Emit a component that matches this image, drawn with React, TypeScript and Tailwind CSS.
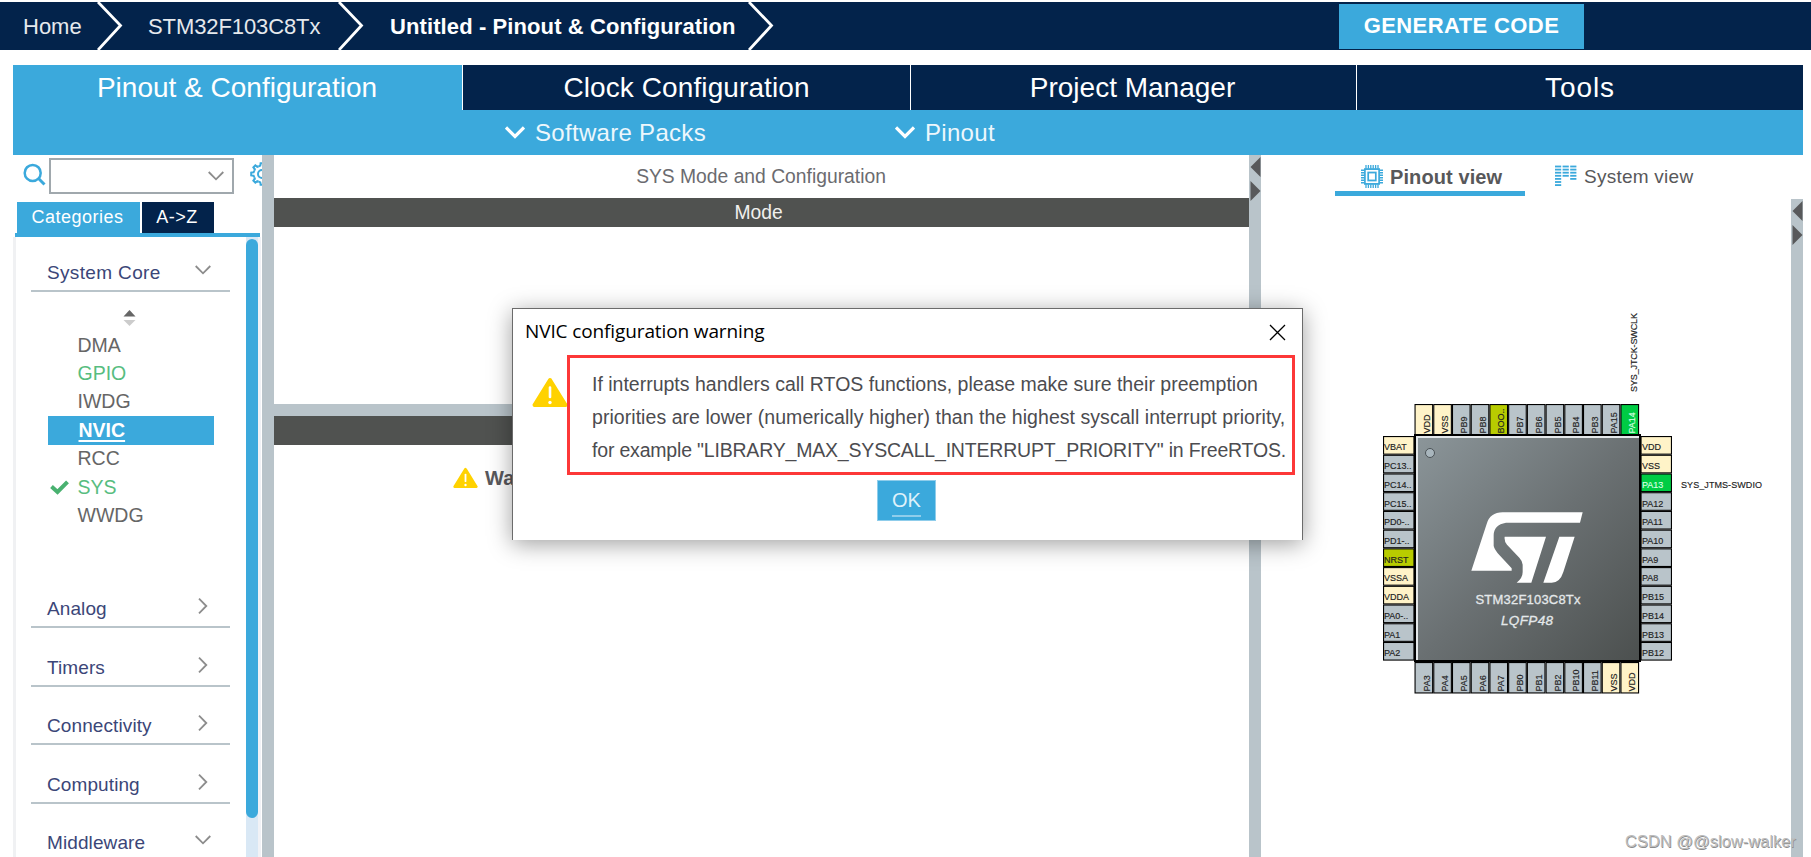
import React from 'react';

const PIN_PITCH = 18.72;

const topPins = ['VDD', 'VSS', 'PB9', 'PB8', 'BOO..', 'PB7', 'PB6', 'PB5', 'PB4', 'PB3', 'PA15', 'PA14'];
const leftPins = ['VBAT', 'PC13..', 'PC14..', 'PC15..', 'PD0-..', 'PD1-..', 'NRST', 'VSSA', 'VDDA', 'PA0-..', 'PA1', 'PA2'];
const rightPins = ['VDD', 'VSS', 'PA13', 'PA12', 'PA11', 'PA10', 'PA9', 'PA8', 'PB15', 'PB14', 'PB13', 'PB12'];
const bottomPins = ['PA3', 'PA4', 'PA5', 'PA6', 'PA7', 'PB0', 'PB1', 'PB2', 'PB10', 'PB11', 'VSS', 'VDD'];

const systemCore = [
  { name: 'DMA', state: 'idle' },
  { name: 'GPIO', state: 'used' },
  { name: 'IWDG', state: 'idle' },
  { name: 'NVIC', state: 'selected' },
  { name: 'RCC', state: 'idle' },
  { name: 'SYS', state: 'checked' },
  { name: 'WWDG', state: 'idle' },
];

function pinFill(name: string) {
  if (name.startsWith('V')) return '#fff3c8';
  if (name === 'BOO..' || name === 'NRST') return '#b8cc00';
  if (name === 'PA13' || name === 'PA14') return '#00cc44';
  return '#b9c4ca';
}

function pinText(name: string) {
  return name === 'PA13' || name === 'PA14' ? '#d8ffe2' : '#222';
}

function Pin({ name, x, y, vertical = false, inset = 1 }: { name: string; x: number; y: number; vertical?: boolean; inset?: number }) {
  const w = vertical ? 18.7 : 31.5;
  const h = vertical ? 31.5 : 18.7;
  return (
    <g>
      <rect x={x} y={y} width={w} height={h} fill="#000" />
      <rect x={x + 1.1} y={y + 1.1} width={w - 2.2} height={h - 2.2} fill={pinFill(name)} />
      {vertical ? (
        <text transform={`translate(${x + 15} ${y + 29.5}) rotate(-90)`} fontSize="9" fill={pinText(name)} stroke={pinText(name)} strokeWidth="0.15">{name}</text>
      ) : (
        <text x={x + inset} y={y + 14.4} fontSize="9" fill={pinText(name)} stroke={pinText(name)} strokeWidth="0.15">{name}</text>
      )}
    </g>
  );
}

function Chip() {
  return (
    <svg width="530" height="658" className="block" fontFamily="Liberation Sans, Arial, sans-serif">
      <defs>
        <linearGradient id="body" x1="0" y1="0" x2="1" y2="1">
          <stop offset="0" stopColor="#8b9599" />
          <stop offset="0.5" stopColor="#6a7072" />
          <stop offset="1" stopColor="#4c504f" />
        </linearGradient>
      </defs>
      <g transform="translate(122 205)">
        {topPins.map((p, i) => <Pin key={p} name={p} x={31.5 + i * PIN_PITCH} y={0} vertical />)}
        {bottomPins.map((p, i) => <Pin key={p} name={p} x={31.5 + i * PIN_PITCH} y={258} vertical />)}
        {leftPins.map((p, i) => <Pin key={p} name={p} x={0} y={32 + i * PIN_PITCH} />)}
        {rightPins.map((p, i) => <Pin key={p} name={p} x={257.5} y={32 + i * PIN_PITCH} inset={1.5} />)}

        <rect x="31" y="30" width="227" height="228" fill="#000" />
        <rect x="33" y="32" width="223" height="224" fill="#e4e8ea" />
        <rect x="35" y="34" width="221" height="222" fill="url(#body)" />
        <circle cx="47" cy="49" r="4.5" fill="#a9b6bd" stroke="#4b5256" strokeWidth="1" />

        {/* ST logo */}
        <g transform="translate(-13 96) scale(0.33333)" fill="#fff">
          <path d="M304 212 L350 72 Q360 37 398 37 L638 37 L630 68 L408 68 Q371 74 371 106 L371 138 Q374 150 388 165 L425 205 L425 212 Z" />
          <path d="M404 110 L528 110 L484 248 L440 248 Q458 234 458 216 L458 194 Q458 184 448 173 L411 134 Q402 124 404 110 Z" />
          <path d="M568 110 L614 110 L580 216 Q570 248 545 248 L520 248 Z" />
        </g>
        <text x="92.5" y="199.5" fontSize="13" fill="#e4e8ea" stroke="#e4e8ea" strokeWidth="0.3" textLength="105">STM32F103C8Tx</text>
        <text x="118" y="220.5" fontSize="13.5" fontStyle="italic" fill="#e4e8ea" stroke="#e4e8ea" strokeWidth="0.3" textLength="52">LQFP48</text>

        <text transform="translate(253.5 -12) rotate(-90)" fontSize="9" fill="#222" stroke="#222" strokeWidth="0.15" textLength="79">SYS_JTCK-SWCLK</text>
        <text x="298" y="83.5" fontSize="9" fill="#222" stroke="#222" strokeWidth="0.15" textLength="81">SYS_JTMS-SWDIO</text>
      </g>
    </svg>
  );
}

function Crumb() {
  return (
    <svg width="26" height="48" viewBox="0 0 26 48" className="block shrink-0" fill="none" stroke="#fff" strokeWidth="2.8">
      <path d="M1 0 L23.5 23.5 L1 48" />
    </svg>
  );
}

function ChevronDown({ className = '' }: { className?: string }) {
  return (
    <svg width="16" height="10" viewBox="0 0 16 10" className={className} fill="none" stroke="#8c8c8c" strokeWidth="1.8">
      <path d="M0.7 1 L8 8.3 L15.3 1" />
    </svg>
  );
}

function ChevronRight({ className = '' }: { className?: string }) {
  return (
    <svg width="10" height="16" viewBox="0 0 10 16" className={className} fill="none" stroke="#8c8c8c" strokeWidth="1.8">
      <path d="M1 0.7 L8.3 8 L1 15.3" />
    </svg>
  );
}

function MenuChevron() {
  return (
    <svg width="20" height="13" viewBox="0 0 20 13" fill="none" stroke="#fff" strokeWidth="3.2">
      <path d="M1 1.5 L10 10.5 L19 1.5" />
    </svg>
  );
}

function SplitArrows() {
  return (
    <svg width="12" height="48" viewBox="0 0 12 48" className="block" fill="#58595b">
      <path d="M11.5 2 V22 L1.5 12 Z" />
      <path d="M1.5 26 V46 L11.5 36 Z" />
    </svg>
  );
}

function WarningIcon({ width, height }: { width: number; height: number }) {
  return (
    <svg width={width} height={height} viewBox="0 0 36 30" className="block shrink-0">
      <path d="M18 2.5 L33.5 27.5 H2.5 Z" fill="#ffd200" stroke="#ffd200" strokeWidth="4" strokeLinejoin="round" />
      <path d="M18 10 V19.5" stroke="#fff" strokeWidth="2.6" strokeLinecap="round" />
      <circle cx="18" cy="25" r="1.7" fill="#fff" />
    </svg>
  );
}

function ChipIcon() {
  const teeth = [5, 7.4, 9.8, 12.2, 14.6, 17];
  return (
    <svg width="22" height="23" viewBox="0 0 22 22" preserveAspectRatio="none" fill="none" stroke="#3ba9dc" strokeWidth="1.3">
      <rect x="3.9" y="3.9" width="14.2" height="14.2" strokeWidth="1.7" />
      <rect x="7.2" y="7.2" width="7.6" height="7.6" strokeWidth="1.7" />
      {teeth.map((t) => (
        <path key={t} d={`M${t} 0 V3.5 M${t} 18.5 V22 M0 ${t} H3.5 M18.5 ${t} H22`} />
      ))}
    </svg>
  );
}

function SystemIcon() {
  const columns = [7, 4, 5];
  return (
    <svg width="22" height="22" viewBox="0 0 22 22" fill="#3ba9dc">
      {columns.map((n, c) =>
        Array.from({ length: n }, (_, r) => (
          <rect key={`${c}-${r}`} x={c * 7.6} y={0.6 + r * 3.1} width="6.2" height="1.8" />
        ))
      )}
    </svg>
  );
}

function GearIcon() {
  const teeth = [0, 45, 90, 135, 180, 225, 270, 315];
  return (
    <svg width="24" height="24" viewBox="0 0 24 24" className="block shrink-0" fill="none" stroke="#3ba9dc" strokeWidth="2">
      {teeth.map((a) => (
        <path key={a} transform={`rotate(${a} 12 12)`} d="M8.8 4.2 L10.3 3.6 L10.6 1.2 H13.4 L13.7 3.6 L15.2 4.2" />
      ))}
      <circle cx="12" cy="12" r="4" />
    </svg>
  );
}

function GroupHeader({ title, open = false, className = '' }: { title: string; open?: boolean; className?: string }) {
  return (
    <div className={`ml-[15px] flex h-[58.5px] w-[199px] shrink-0 items-end justify-between border-b-2 border-[#b9c4ca] pb-[5px] pl-[16px] ${className}`}>
      <span className={`text-[19px] leading-6 text-[#3b4678] ${title === 'System Core' ? 'tracking-[0.35px]' : 'tracking-[0.1px]'}`}>{title}</span>
      {open ? <ChevronDown className="mr-[19px] mb-[10px]" /> : <ChevronRight className="mr-[22px] mb-[7px]" />}
    </div>
  );
}

function Sidebar() {
  return (
    <aside className="flex w-[249px] shrink-0 flex-col overflow-hidden">
      <div className="flex h-[47px] shrink-0 items-start pt-[3px] pl-[10px]">
        <svg width="23" height="23" viewBox="0 0 23 23" className="mt-[5px] shrink-0" fill="none" stroke="#3ba9dc" strokeWidth="2.5">
          <circle cx="9.7" cy="9.9" r="8" />
          <path d="M15.3 15.3 L21.5 21.5" strokeWidth="3" />
        </svg>
        <div className="ml-[3px] flex h-9 w-[185px] shrink-0 items-center justify-end border-2 border-[#a0a8ad] pr-[8px]">
          <ChevronDown />
        </div>
        <div className="mt-[4px] ml-[16px]">
          <GearIcon />
        </div>
      </div>
      <div className="flex h-[31px] shrink-0 gap-[2px] pl-[4px] text-[18px] text-white">
        <div className="flex w-[123px] items-center justify-center bg-[#3ba9dc] pr-[2px] tracking-[0.5px]">Categories</div>
        <div className="flex w-[72px] items-center justify-center bg-[#03234b] pr-[2px] tracking-[0.5px]">A-&gt;Z</div>
      </div>
      <div className="ml-[2px] h-[4px] w-[245px] shrink-0 bg-[#3ba9dc]" />
      <div className="flex min-h-0 flex-1">
        <div className="w-[3px] shrink-0 bg-[#f0f1f3]" />
        <div className="flex min-w-0 flex-1 flex-col overflow-hidden">
          <GroupHeader title="System Core" open className="h-[55px]!" />
          <svg width="13" height="17" viewBox="0 0 13 17" className="mt-[18px] ml-[107px] block shrink-0">
            <path d="M6.5 0 L12.5 6.5 H0.5 Z" fill="#666" />
            <path d="M6.5 16 L12.5 10 H0.5 Z" fill="#ccc" />
          </svg>
          <ul className="mt-[4px] ml-[31.5px] w-[166.5px] shrink-0 text-[19.5px]">
            {systemCore.map((item) => (
              <li
                key={item.name}
                className={`flex h-[28.4px] items-center ${item.state === 'selected' ? 'bg-[#3ba9dc] font-bold text-white' : item.state === 'idle' ? 'text-[#666]' : 'text-[#57bd80]'}`}
              >
                <span className="flex w-[30px] shrink-0 items-center pl-[2px]">
                  {item.state === 'checked' && (
                    <svg width="19" height="15" viewBox="0 0 19 15" fill="none" stroke="#49b170" strokeWidth="4">
                      <path d="M1.5 6.5 L7.5 12 L17.5 1.8" />
                    </svg>
                  )}
                </span>
                <span className={item.state === 'selected' ? 'pl-px underline decoration-[1.5px] underline-offset-[3px]' : ''}>{item.name}</span>
              </li>
            ))}
          </ul>
          <GroupHeader title="Analog" className="mt-[40px]" />
          <GroupHeader title="Timers" />
          <GroupHeader title="Connectivity" />
          <GroupHeader title="Computing" />
          <GroupHeader title="Middleware" open />
        </div>
        <div className="w-[12px] shrink-0 bg-[#d9e8f5] pt-[2px]">
          <div className="h-[579px] rounded-full bg-[#3ba9dc]" />
        </div>
        <div className="mr-[1px] w-[3px] shrink-0 bg-[#f1f2f6]" />
      </div>
    </aside>
  );
}

function WarningDialog() {
  return (
    <div className="absolute top-[308px] left-[512px] flex h-[232px] w-[791px] flex-col border border-b-0 border-[#6b6b6b] bg-white shadow-[0_4px_22px_rgba(0,0,0,0.38)]">
      <div className="flex h-[46px] shrink-0 items-center justify-between pr-[16px] pl-[12px]">
        <h2 className="pb-[2px] font-['Open_Sans',sans-serif] text-[19px] tracking-[-0.12px] text-black">NVIC configuration warning</h2>
        <svg width="17" height="17" viewBox="0 0 17 17" stroke="#000" strokeWidth="1.3">
          <path d="M1 1 L16 16 M16 1 L1 16" />
        </svg>
      </div>
      <div className="flex h-[120px] shrink-0">
        <div className="w-[54px] shrink-0 pt-[22px] pl-[19px]">
          <WarningIcon width={36} height={31} />
        </div>
        <div className="relative w-[728px] border-3 border-[#fd3838] bg-white pt-[10px] pl-[22px] text-[19.5px] leading-[33px] whitespace-nowrap text-[#4c4c50]">
          <p>If interrupts handlers call RTOS functions, please make sure their preemption</p>
          <p className="tracking-[0.05px]">priorities are lower (numerically higher) than the highest syscall interrupt priority,</p>
          <p className="tracking-[-0.19px]">for example "LIBRARY_MAX_SYSCALL_INTERRUPT_PRIORITY" in FreeRTOS.</p>
        </div>
      </div>
      <button className="mt-[5px] ml-[364px] flex h-[41px] w-[59px] items-center justify-center border border-[#8fcdeb] bg-[#3ba9dc] text-[20px] text-[#dff1fa]">
        <span className="border-b-2 border-[#8fcdeb] leading-[30px]">OK</span>
      </button>
    </div>
  );
}

export default function App() {
  return (
    <div className="relative flex h-[857px] w-[1811px] flex-col overflow-hidden bg-white font-['Liberation_Sans',Arial,sans-serif]">
      <header className="mt-[2px] flex h-12 shrink-0 items-center bg-[#03234b] text-[22px] text-white">
        <span className="w-[97px] pl-[23px] text-[#e6e9ed]">Home</span>
        <Crumb />
        <span className="w-[215px] pl-[25px] tracking-[-0.1px] text-[#e6e9ed]">STM32F103C8Tx</span>
        <Crumb />
        <span className="w-[384px] pl-[26px] font-bold whitespace-nowrap tracking-[0.1px]">Untitled - Pinout &amp; Configuration</span>
        <Crumb />
        <button className="ml-[565px] h-[45px] w-[245px] bg-[#3ba9dc] pb-px font-bold tracking-[0.4px]">GENERATE CODE</button>
      </header>

      <nav className="mt-[15px] ml-[13px] flex h-[45px] w-[1790px] shrink-0 bg-[#03234b] text-[28px] text-white">
        <div className="flex w-[449px] items-center justify-center bg-[#3ba9dc] pt-px pr-px">Pinout &amp; Configuration</div>
        <div className="flex w-[448px] items-center justify-center border-l border-white pt-px tracking-[0.1px]">Clock Configuration</div>
        <div className="flex w-[446px] items-center justify-center border-l border-white pt-px pr-[2px]">Project Manager</div>
        <div className="flex w-[447px] items-center justify-center border-l border-white pt-px tracking-[0.9px]">Tools</div>
      </nav>
      <div className="ml-[13px] flex h-[45px] w-[1790px] shrink-0 items-center bg-[#3ba9dc] pl-[492px] text-[24px] text-[#edf7fc]">
        <div className="flex w-[390px] items-center gap-[10px] tracking-[0.3px]">
          <MenuChevron />
          Software Packs
        </div>
        <div className="flex items-center gap-[10px] tracking-[0.3px]">
          <MenuChevron />
          Pinout
        </div>
      </div>

      <main className="ml-[13px] flex min-h-0 w-[1790px] flex-1">
        <Sidebar />
        <div className="w-[12px] shrink-0 bg-[#b9c4ca]" />

        <section className="flex w-[975px] shrink-0 flex-col text-[19.3px]">
          <div className="flex h-[43px] shrink-0 items-center justify-center pt-[2px] pr-px text-[#6b6b6f]">SYS Mode and Configuration</div>
          <div className="flex h-[29px] shrink-0 items-center justify-center bg-[#505250] pt-[2px] pr-[6px] text-[#f0f0ee]">Mode</div>
          <div className="h-[177px] shrink-0" />
          <div className="h-[12px] shrink-0 bg-[#b9c4ca]" />
          <div className="h-[29px] shrink-0 bg-[#505250]" />
          <div className="flex items-center gap-[7px] pt-[18px] pl-[179px] text-[20px] font-bold text-[#58585c]">
            <WarningIcon width={25} height={22} />
            Warning
          </div>
        </section>

        <div className="w-[12px] shrink-0 bg-[#b9c4ca]">
          <SplitArrows />
        </div>

        <section className="flex flex-1 flex-col">
          <div className="flex h-[44px] shrink-0 pl-[74px] text-[#58585a]">
            <div className="flex h-[41px] w-[190px] items-center gap-[7px] border-b-5 border-[#3ba9dc] pt-[6px] pl-[26px] text-[20px] font-bold tracking-[0.1px]">
              <ChipIcon />
              <span className="pt-px">Pinout view</span>
            </div>
            <div className="flex h-[41px] items-center gap-[7px] pt-[1px] pl-[30px] text-[19px] tracking-[0.25px]">
              <SystemIcon />
              <span className="pt-[2px]">System view</span>
            </div>
          </div>
          <div className="flex min-h-0 flex-1">
            <Chip />
            <div className="flex-1 bg-[#b9c4ca]">
              <SplitArrows />
            </div>
          </div>
        </section>
      </main>

      <WarningDialog />

      {/* watermark */}
      <div className="absolute right-[15px] bottom-[5px] text-[16.5px] leading-[22px] text-[#bdbdbd] [text-shadow:0.6px_0.6px_0_#8c8c8c]">CSDN @@slow-walker</div>
    </div>
  );
}
